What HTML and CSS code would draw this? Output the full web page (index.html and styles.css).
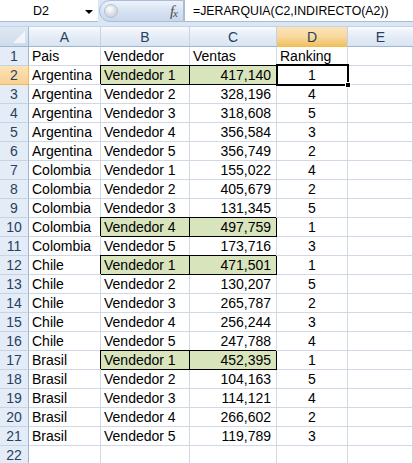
FILE: index.html
```html
<!DOCTYPE html>
<html>
<head>
<meta charset="utf-8">
<link rel="stylesheet" href="styles.css">
</head>
<body>
<div class="app">
  <div class="fbar">
    <div class="namebox"><span class="ref">D2</span><span class="arrow"></span></div>
    <div class="pill"><span class="knob"></span><span class="fx"><i>f</i><span class="x">x</span></span></div>
    <div class="formula">=JERARQUIA(C2,INDIRECTO(A2))</div>
  </div>
  <div class="sheet">
    <div class="h corner"><span class="tri"></span></div><div class="h col">A</div><div class="h col">B</div><div class="h col">C</div><div class="h col sel">D</div><div class="h col last">E</div>

    <div class="h row">1</div><div class="c">Pais</div><div class="c">Vendedor</div><div class="c">Ventas</div><div class="c">Ranking</div><div class="c"></div>
    <div class="h row sel">2</div><div class="c">Argentina</div><div class="c hl">Vendedor 1</div><div class="c n hl">417,140</div><div class="c r cur">1<span class="selbox"><span class="handle"></span></span></div><div class="c"></div>
    <div class="h row">3</div><div class="c">Argentina</div><div class="c">Vendedor 2</div><div class="c n">328,196</div><div class="c r">4</div><div class="c"></div>
    <div class="h row">4</div><div class="c">Argentina</div><div class="c">Vendedor 3</div><div class="c n">318,608</div><div class="c r">5</div><div class="c"></div>
    <div class="h row">5</div><div class="c">Argentina</div><div class="c">Vendedor 4</div><div class="c n">356,584</div><div class="c r">3</div><div class="c"></div>
    <div class="h row">6</div><div class="c">Argentina</div><div class="c">Vendedor 5</div><div class="c n">356,749</div><div class="c r">2</div><div class="c"></div>
    <div class="h row">7</div><div class="c">Colombia</div><div class="c">Vendedor 1</div><div class="c n">155,022</div><div class="c r">4</div><div class="c"></div>
    <div class="h row">8</div><div class="c">Colombia</div><div class="c">Vendedor 2</div><div class="c n">405,679</div><div class="c r">2</div><div class="c"></div>
    <div class="h row">9</div><div class="c">Colombia</div><div class="c">Vendedor 3</div><div class="c n">131,345</div><div class="c r">5</div><div class="c"></div>
    <div class="h row">10</div><div class="c">Colombia</div><div class="c hl">Vendedor 4</div><div class="c n hl">497,759</div><div class="c r">1</div><div class="c"></div>
    <div class="h row">11</div><div class="c">Colombia</div><div class="c">Vendedor 5</div><div class="c n">173,716</div><div class="c r">3</div><div class="c"></div>
    <div class="h row">12</div><div class="c">Chile</div><div class="c hl">Vendedor 1</div><div class="c n hl">471,501</div><div class="c r">1</div><div class="c"></div>
    <div class="h row">13</div><div class="c">Chile</div><div class="c">Vendedor 2</div><div class="c n">130,207</div><div class="c r">5</div><div class="c"></div>
    <div class="h row">14</div><div class="c">Chile</div><div class="c">Vendedor 3</div><div class="c n">265,787</div><div class="c r">2</div><div class="c"></div>
    <div class="h row">15</div><div class="c">Chile</div><div class="c">Vendedor 4</div><div class="c n">256,244</div><div class="c r">3</div><div class="c"></div>
    <div class="h row">16</div><div class="c">Chile</div><div class="c">Vendedor 5</div><div class="c n">247,788</div><div class="c r">4</div><div class="c"></div>
    <div class="h row">17</div><div class="c">Brasil</div><div class="c hl">Vendedor 1</div><div class="c n hl">452,395</div><div class="c r">1</div><div class="c"></div>
    <div class="h row">18</div><div class="c">Brasil</div><div class="c">Vendedor 2</div><div class="c n">104,163</div><div class="c r">5</div><div class="c"></div>
    <div class="h row">19</div><div class="c">Brasil</div><div class="c">Vendedor 3</div><div class="c n">114,121</div><div class="c r">4</div><div class="c"></div>
    <div class="h row">20</div><div class="c">Brasil</div><div class="c">Vendedor 4</div><div class="c n">266,602</div><div class="c r">2</div><div class="c"></div>
    <div class="h row">21</div><div class="c">Brasil</div><div class="c">Vendedor 5</div><div class="c n">119,789</div><div class="c r">3</div><div class="c"></div>
    <div class="h row">22</div><div class="c"></div><div class="c"></div><div class="c"></div><div class="c"></div><div class="c"></div>
  </div>
</div>
</body>
</html>
```
FILE: styles.css
```css
* { box-sizing: border-box; }
html, body { margin: 0; padding: 0; background: #fff; }
.app { width: 413px; height: 463px; overflow: hidden; font-family: "Liberation Sans", Arial, sans-serif; }

.fbar {
  display: flex;
  height: 27px;
  background: #dbe6f4;
  padding-bottom: 4px;
  border-bottom: 1px solid #c5d2e3;
}
.namebox {
  width: 98px;
  background: #fff;
  border-bottom: 1px solid #a9bdd8;
  display: flex;
  align-items: center;
  position: relative;
}
.ref { width: 82px; text-align: center; font-size: 12.5px; color: #000; padding-top: 1px; }
.arrow {
  width: 0; height: 0;
  border-left: 4px solid transparent;
  border-right: 4px solid transparent;
  border-top: 4px solid #000;
  margin-left: 3px;
  margin-top: 2px;
}
.pill {
  width: 85px;
  margin-left: 1px;
  height: 22px;
  border: 1px solid #a9bdd8;
  border-radius: 11px 0 0 11px;
  background: linear-gradient(#eef3fa, #d5e1f1 55%, #c9d8ec);
  display: flex;
  align-items: center;
  position: relative;
}
.knob {
  width: 14px; height: 14px;
  border-radius: 50%;
  margin-left: 4px;
  background: radial-gradient(circle at 40% 35%, #ffffff 0, #e6e9ee 35%, #b9c2cf 100%);
  border: 1px solid #b5c1d1;
}
.fx {
  margin-left: auto;
  margin-right: 6px;
  font-family: "Liberation Serif", "Times New Roman", serif;
  font-size: 15px;
  color: #4d4d4d;
  letter-spacing: -1px;
}
.fx .x { font-size: 11px; font-style: italic; position: relative; top: 1px; }
.formula {
  flex: 1;
  background: #fff;
  border-left: 1px solid #a9bdd8;
  border-bottom: 1px solid #a9bdd8;
  font-size: 12.3px;
  color: #000;
  padding: 4px 0 0 8px;
  white-space: nowrap;
  overflow: hidden;
}

.sheet {
  display: grid;
  grid-template-columns: 29px 72px 89px 87px 71px 65px;
  grid-template-rows: 20px;
  grid-auto-rows: 19px;
}
.h {
  background: linear-gradient(#f8fafd, #e4ecf7 50%, #dae4f1);
  border-right: 1px solid #c5d3e3;
  border-bottom: 1px solid #9eb6ce;
  color: #27415f;
  font-size: 14px;
  text-align: center;
  line-height: 19px;
}
.h.col { padding-top: 1px; }
.h.row {
  background: #e4ecf7;
  border-bottom: 1px solid #c5d3e3;
  border-right: 1px solid #9eb6ce;
  line-height: 17px;
  padding-top: 1px;
}
.h.corner { position: relative; background: linear-gradient(#dfe8f4, #cfdbec); border-right: 1px solid #9eb6ce; }
.tri {
  position: absolute; right: 3px; bottom: 3px;
  width: 0; height: 0;
  border-left: 12px solid transparent;
  border-bottom: 12px solid #f2f6fb;
}
.h.sel { background: linear-gradient(#fbe3b8, #f9d99f 50%, #f1c15f); border-bottom-color: #f2ba53; }
.h.row.sel { background: linear-gradient(#fbe3b8, #f9d092); border-right-color: #f2ba53; }
.h.last { border-right: none; }

.c {
  border-right: 1px solid #d0d7e5;
  border-bottom: 1px solid #d0d7e5;
  font-size: 14px;
  line-height: 17px;
  padding: 1px 3px 0 3px;
  color: #000;
  white-space: nowrap;
  overflow: hidden;
}
.c.n { text-align: right; padding-right: 5px; }
.c.r { text-align: center; }
.c.hl {
  background: #d8e4bc;
  border-right-color: #000;
  border-bottom-color: #000;
  box-shadow: -1px -1px 0 #000;
}
.c.cur { position: relative; overflow: visible; }
.selbox {
  position: absolute;
  left: -1px; top: -2px; right: -2px; bottom: -2px;
  border: 2px solid #000;
}
.handle {
  position: absolute;
  right: -4px; bottom: -4px;
  width: 6px; height: 6px;
  background: #000;
  border: 1px solid #fff;
}
```
